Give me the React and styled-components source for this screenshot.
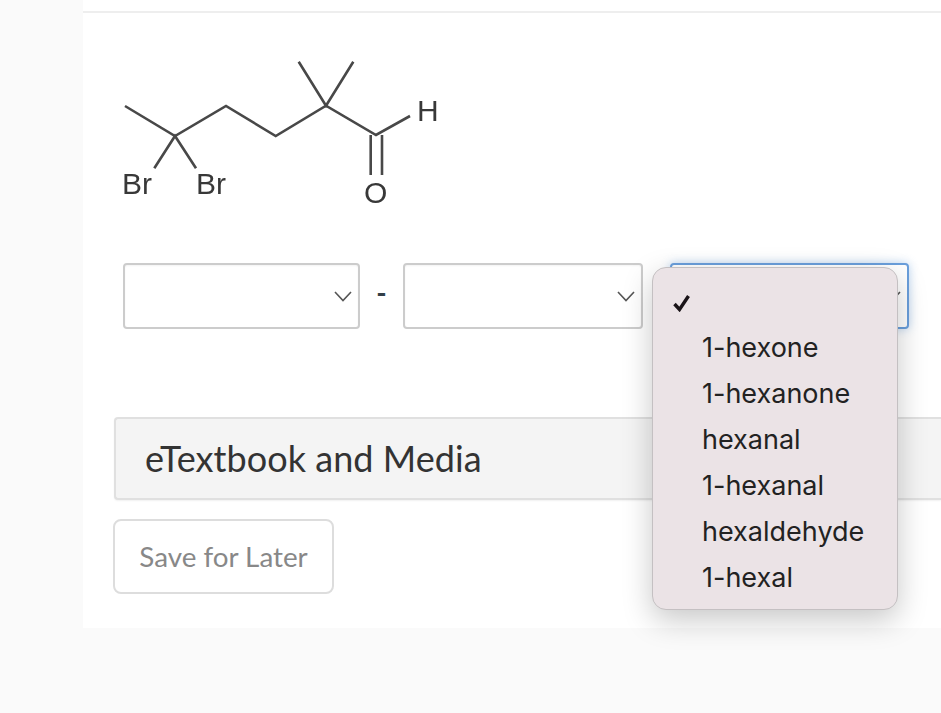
import React from 'react';
import styled, { createGlobalStyle } from 'styled-components';

const GlobalStyle = createGlobalStyle`
  html, body {
    margin: 0;
    height: 100%;
    overflow: hidden;
    background: #fafafa;
  }
`;

const Page = styled.div`
  position: relative;
  width: 941px;
  height: 713px;
  padding-left: 83px;
  box-sizing: border-box;
  overflow: hidden;
  background: #fafafa;
`;

const Card = styled.main`
  height: 628px;
  background: #ffffff;
  padding-top: 11px;
  box-sizing: border-box;
`;

const TopRule = styled.div`
  height: 2px;
  background: #eeeeee;
`;

const Molecule = styled.svg`
  display: block;
  width: 340px;
  height: 180px;
  margin: 27px 0 0 17px;
  filter: blur(0.6px);
`;

const Bond = styled.path`
  fill: none;
  stroke: #484848;
  stroke-width: 2.6;
`;

const Atom = styled.text`
  font-family: "Liberation Sans", Arial, sans-serif;
  font-size: 30px;
  fill: #383838;
`;

const SelectRow = styled.div`
  display: flex;
  align-items: center;
  height: 66px;
  margin: 43px 0 0 40px;
`;

const Select = styled.div`
  position: relative;
  width: ${(p) => p.$width}px;
  height: 66px;
  margin-left: ${(p) => p.$gap || 0}px;
  box-sizing: border-box;
  background: #ffffff;
  border: 2px solid ${(p) => (p.$focused ? '#6a9fdc' : '#cccccc')};
  border-radius: 4px;
  box-shadow: ${(p) => (p.$focused ? '0 0 10px rgba(102, 160, 225, 0.45)' : 'inset 0 1px 2px rgba(0, 0, 0, 0.05)')};
`;

const Chevron = styled.svg`
  position: absolute;
  right: 6px;
  top: 25px;
  width: 18px;
  height: 12px;
  fill: none;
  stroke: #555555;
  stroke-width: 1.6;
`;

const Dash = styled.span`
  width: 43px;
  margin-top: -9px;
  text-align: center;
  font-family: Lato, sans-serif;
  font-size: 28px;
  font-weight: 700;
  line-height: 66px;
  color: #333f48;
`;

const Accordion = styled.div`
  height: 83px;
  margin: 88px 0 0 31px;
  padding: 0 0 1px 29px;
  display: flex;
  align-items: center;
  box-sizing: border-box;
  background: #f4f4f4;
  border: 2px solid #e0e0e0;
  border-right: none;
  border-radius: 4px 0 0 4px;
  box-shadow: 0 1px 2px rgba(0, 0, 0, 0.06);
  font-family: Lato, sans-serif;
  font-size: 36px;
  letter-spacing: 0.05px;
  color: #333333;
`;

const SaveButton = styled.button`
  display: block;
  width: 221px;
  height: 75px;
  margin: 19px 0 0 30px;
  padding: 0;
  background: #ffffff;
  border: 2px solid #dddddd;
  border-radius: 8px;
  font-family: Lato, sans-serif;
  font-size: 27.8px;
  color: #888888;
`;

const Menu = styled.ul`
  position: absolute;
  left: 652px;
  top: 267px;
  width: 246px;
  height: 343px;
  margin: 0;
  padding: 11px 0 0;
  box-sizing: border-box;
  list-style: none;
  background: #ebe3e6;
  border: 1px solid #c4c0c2;
  border-radius: 14px;
  box-shadow: 0 10px 30px rgba(0, 0, 0, 0.22);
  font-family: Inter, sans-serif;
  font-size: 27px;
  color: #222222;
`;

const MenuItem = styled.li`
  position: relative;
  height: 46px;
  line-height: 46px;
  padding-left: 49px;
  white-space: nowrap;
`;

const Check = styled.svg`
  position: absolute;
  left: 19px;
  top: 15px;
  width: 20px;
  height: 18px;
  fill: none;
  stroke: #1a1418;
  stroke-width: 3.4;
`;

const options = ['', '1-hexone', '1-hexanone', 'hexanal', '1-hexanal', 'hexaldehyde', '1-hexal'];

function ArrowDown() {
  return (
    <Chevron viewBox="0 0 18 12">
      <path d="M1 2 L9 10.5 L17 2" />
    </Chevron>
  );
}

export default function App() {
  return (
    <Page>
      <GlobalStyle />
      <Card>
        <TopRule />
        <Molecule viewBox="100 40 340 180">
          <Bond d="M125 106 L175 136 L226 106 L275.7 136 L326 105.7 L376 135 L410 116" />
          <Bond d="M298.7 61.7 L326 105.7 L353.3 61.7" />
          <Bond d="M154.3 168.3 L175 136 L196 168.3" />
          <Bond d="M370.7 135 V175 M382 135 V175" />
          <Atom x="122" y="194">Br</Atom>
          <Atom x="196" y="194">Br</Atom>
          <Atom x="364" y="203">O</Atom>
          <Atom x="417" y="121">H</Atom>
        </Molecule>
        <SelectRow>
          <Select $width={237}>
            <ArrowDown />
          </Select>
          <Dash>-</Dash>
          <Select $width={240}>
            <ArrowDown />
          </Select>
          <Select $width={239} $gap={27} $focused>
            <ArrowDown />
          </Select>
        </SelectRow>
        <Accordion>eTextbook and Media</Accordion>
        <SaveButton>Save for Later</SaveButton>
      </Card>
      <Menu>
        {options.map((name) => (
          <MenuItem key={name || 'blank'}>
            {name === '' && (
              <Check viewBox="0 0 20 18">
                <path d="M2.5 10 L7.5 15.5 L16.5 2" />
              </Check>
            )}
            {name}
          </MenuItem>
        ))}
      </Menu>
    </Page>
  );
}
